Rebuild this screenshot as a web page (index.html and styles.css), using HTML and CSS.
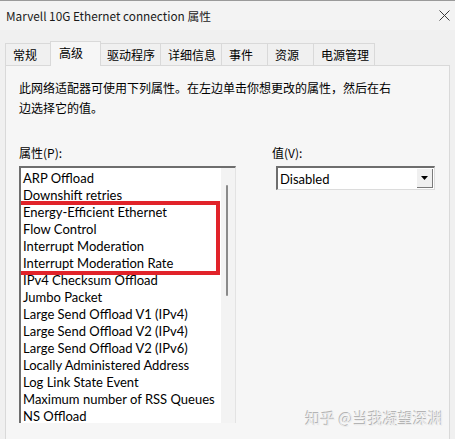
FILE: index.html
```html
<!DOCTYPE html>
<html lang="zh-CN">
<head>
    <meta charset="UTF-8">
    <title>Marvell 10G Ethernet connection 属性</title>
    <link rel="stylesheet" href="styles.css">
</head>
<body>
    <div class="window">
        <div class="titlebar">
            <span class="title">Marvell 10G Ethernet connection 属性</span>
            <svg class="close" width="11" height="11" viewBox="0 0 11 11">
                <path d="M0.5 0.5 L10.5 10.5 M10.5 0.5 L0.5 10.5" stroke="#3a3a3a" stroke-width="1" fill="none"/>
            </svg>
        </div>

        <div class="tabs">
            <div class="tab">常规</div>
            <div class="tab active">高级</div>
            <div class="tab">驱动程序</div>
            <div class="tab">详细信息</div>
            <div class="tab">事件</div>
            <div class="tab">资源</div>
            <div class="tab">电源管理</div>
        </div>

        <div class="panel">
            <p class="desc">此网络适配器可使用下列属性。在左边单击你想更改的属性，然后在右<br>边选择它的值。</p>

            <div class="fields">
                <div class="prop-col">
                    <div class="field-label">属性(P):</div>
                    <div class="listbox">
                        <ul class="items">
                            <li>ARP Offload</li>
                            <li>Downshift retries</li>
                            <li>Energy-Efficient Ethernet</li>
                            <li>Flow Control</li>
                            <li>Interrupt Moderation</li>
                            <li>Interrupt Moderation Rate</li>
                            <li>IPv4 Checksum Offload</li>
                            <li>Jumbo Packet</li>
                            <li>Large Send Offload V1 (IPv4)</li>
                            <li>Large Send Offload V2 (IPv4)</li>
                            <li>Large Send Offload V2 (IPv6)</li>
                            <li>Locally Administered Address</li>
                            <li>Log Link State Event</li>
                            <li>Maximum number of RSS Queues</li>
                            <li>NS Offload</li>
                        </ul>
                        <div class="scrollbar"><div class="thumb"></div></div>
                        <!-- annotation box drawn over the list -->
                        <div class="mark"></div>
                    </div>
                </div>

                <div class="value-col">
                    <div class="field-label">值(V):</div>
                    <div class="select">
                        <span class="select-text">Disabled</span>
                        <span class="select-btn">
                            <svg width="7" height="4" viewBox="0 0 7 4"><path d="M0 0 H7 L3.5 4 Z" fill="#000"/></svg>
                        </span>
                    </div>
                </div>
            </div>

            <div class="watermark">知乎 @当我凝望深渊</div>
        </div>
    </div>
</body>
</html>
```

FILE: styles.css
```css
body {
    margin: 0;
    padding: 0;
    overflow: hidden;
    background-color: #f0f0f0;
    font-family: "Noto Sans CJK SC", sans-serif;
    font-size: 12px;
    color: #000;
}

.window {
    width: 455px;
    height: 439px;
    display: flex;
    flex-direction: column;
    background-color: #f0f0f0;
}

.titlebar {
    height: 30px;
    display: flex;
    align-items: center;
    justify-content: space-between;
    padding: 0 5px 0 6px;
    background-color: #f3f3f3;
    border-top: 1px solid #9a9a9a;
    box-sizing: border-box;
}

.title {
    font-size: 11.8px;
    color: #1a1a1a;
}

.tabs {
    display: flex;
    align-items: flex-end;
    height: 35px;
    padding-left: 5px;
}

.tab {
    min-width: 47px;
    height: 22px;
    line-height: 21px;
    padding: 0 5px 0 7px;
    border: 1px solid #d9d9d9;
    border-bottom: none;
    margin-right: -1px;
    box-sizing: border-box;
    background-color: #f0f0f0;
}

.tab.active {
    min-width: 51px;
    height: 25px;
    line-height: 21px;
    padding: 0 5px 0 8px;
    margin-left: -1px;
    margin-right: -2px;
    background-color: #f6f6f6;
    position: relative;
    z-index: 1;
    margin-bottom: -1px;
}

.panel {
    flex: 1;
    margin: 0 5px 0 5px;
    border: 1px solid #d9d9d9;
    border-bottom: none;
    background-color: #f6f6f6;
    padding: 12px 13px 0 13px;
    position: relative;
}

.desc {
    margin: 0;
    line-height: 20px;
}

.fields {
    display: flex;
    margin-top: 25px;
}

.field-label {
    height: 20px;
    line-height: 20px;
    margin-bottom: 3px;
}

.prop-col {
    width: 217px;
}

.value-col {
    margin-left: 36px;
}

.listbox {
    position: relative;
    width: 217px;
    height: 257px;
    background-color: #fff;
    border-top: 2px solid #6e6e6e;
    border-left: 2px solid #6e6e6e;
    border-right: 1px solid #e3e3e3;
    box-sizing: border-box;
    display: flex;
    overflow: hidden;
}

.items {
    list-style: none;
    margin: 0;
    padding: 2px 0 0 2px;
    flex: 1;
    white-space: nowrap;
    overflow: hidden;
}

.items li {
    height: 17px;
    line-height: 17px;
    font-family: Lato, "Noto Sans CJK SC", sans-serif;
    font-size: 13px;
}

.scrollbar {
    width: 14px;
    background-color: #f3f3f3;
    position: relative;
}

.thumb {
    position: absolute;
    left: 5px;
    top: 17px;
    width: 2px;
    height: 111px;
    background-color: #8a8a8a;
    border-radius: 1px;
}

.mark {
    position: absolute;
    left: -7px;
    top: 33px;
    width: 206px;
    height: 74px;
    border: 4px solid #e1232a;
    box-sizing: border-box;
}

.select {
    width: 159px;
    height: 24px;
    margin-left: 4px;
    display: flex;
    align-items: center;
    background-color: #fff;
    border-top: 2px solid #6e6e6e;
    border-left: 2px solid #6e6e6e;
    border-right: 1px solid #dcdcdc;
    border-bottom: 1px solid #dcdcdc;
    box-sizing: border-box;
}

.select-text {
    flex: 1;
    padding-left: 2px;
    font-family: Lato, "Noto Sans CJK SC", sans-serif;
    font-size: 13px;
}

.select-btn {
    width: 16px;
    height: 19px;
    margin-right: 1px;
    display: flex;
    align-items: center;
    justify-content: center;
    background-color: #f0f0f0;
    border-right: 1px solid #7a7a7a;
    border-bottom: 1px solid #7a7a7a;
    box-sizing: border-box;
}

.watermark {
    position: absolute;
    right: 6px;
    bottom: 11px;
    font-size: 15px;
    color: #ececec;
    text-shadow: -1px -1px 0 #b4b4b4;
}
```
